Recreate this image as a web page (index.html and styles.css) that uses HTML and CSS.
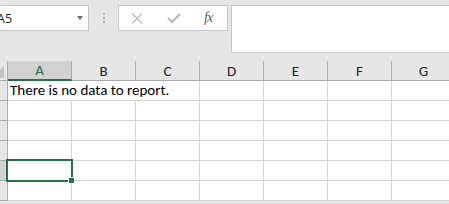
FILE: index.html
```html
<!DOCTYPE html>
<html>
<head>
  <title>Sheet</title>
  <link rel="stylesheet" href="styles.css">
</head>
<body>
  <div class="toolbar">
    <div class="name-box">
      <span class="cell-ref">A5</span>
      <span class="drop-arrow"></span>
    </div>
    <div class="splitter"><i></i><i></i><i></i></div>
    <div class="fx-buttons">
      <svg class="btn-cancel" width="12" height="11" viewBox="0 0 12 11">
        <path d="M1 0.5 L11 10.5 M11 0.5 L1 10.5" stroke="#bdbdbd" stroke-width="1.4" fill="none"/>
      </svg>
      <svg class="btn-enter" width="14" height="11" viewBox="0 0 14 11">
        <path d="M1 5 L5 9 L13 1" stroke="#bdbdbd" stroke-width="2.4" fill="none"/>
      </svg>
      <span class="btn-fx">fx</span>
    </div>
    <div class="formula-input"></div>
  </div>

  <div class="sheet">
    <div class="corner"><span class="corner-tri"></span></div>
    <div class="col-head active">A</div>
    <div class="col-head">B</div>
    <div class="col-head">C</div>
    <div class="col-head">D</div>
    <div class="col-head">E</div>
    <div class="col-head">F</div>
    <div class="col-head">G</div>

    <div class="row-head"></div>
    <div class="cell text-cell">There is no data to report.</div>
    <div class="cell"></div><div class="cell"></div><div class="cell"></div><div class="cell"></div>

    <div class="row-head"></div>
    <div class="cell"></div><div class="cell"></div><div class="cell"></div><div class="cell"></div><div class="cell"></div><div class="cell"></div><div class="cell"></div>

    <div class="row-head"></div>
    <div class="cell"></div><div class="cell"></div><div class="cell"></div><div class="cell"></div><div class="cell"></div><div class="cell"></div><div class="cell"></div>

    <div class="row-head"></div>
    <div class="cell"></div><div class="cell"></div><div class="cell"></div><div class="cell"></div><div class="cell"></div><div class="cell"></div><div class="cell"></div>

    <div class="row-head active"></div>
    <div class="cell selected">
      <div class="selection"></div>
      <div class="fill-handle"></div>
    </div>
    <div class="cell"></div><div class="cell"></div><div class="cell"></div><div class="cell"></div><div class="cell"></div><div class="cell"></div>

    <div class="row-head"></div>
    <div class="cell"></div><div class="cell"></div><div class="cell"></div><div class="cell"></div><div class="cell"></div><div class="cell"></div><div class="cell"></div>
  </div>
</body>
</html>
```

FILE: styles.css
```css
html {
  overflow: hidden;
}

body {
  margin: 0;
  background-color: #e6e6e6;
  font-family: Carlito, Lato, "Open Sans", sans-serif;
  overflow: hidden;
  width: 449px;
  height: 204px;
}

/* formula bar */
.toolbar {
  display: flex;
  align-items: flex-start;
  height: 61px;
  padding-top: 5px;
  box-sizing: border-box;
}

.name-box {
  display: flex;
  align-items: center;
  width: 101px;
  height: 26px;
  margin-left: -12px;
  padding-left: 8px;
  padding-right: 5px;
  box-sizing: border-box;
  background-color: #fff;
  border: 1px solid #c6c6c6;
  font-family: "Open Sans", sans-serif;
  font-size: 12.5px;
  color: #1e1e1e;
}

.drop-arrow {
  margin-left: auto;
  width: 0;
  height: 0;
  border-left: 3.5px solid transparent;
  border-right: 3.5px solid transparent;
  border-top: 4px solid #6d6d6d;
}

.splitter {
  display: flex;
  flex-direction: column;
  gap: 2px;
  margin: 8px 0 0 14px;
}

.splitter i {
  width: 2px;
  height: 2px;
  background-color: #b4b4b4;
}

.fx-buttons {
  display: flex;
  align-items: center;
  width: 110px;
  height: 26px;
  margin-left: 13px;
  padding-left: 12px;
  box-sizing: border-box;
  background-color: #fff;
  border: 1px solid #c6c6c6;
}

.btn-enter {
  margin-left: 24px;
}

.btn-fx {
  margin-left: 23px;
  font-family: "Liberation Serif", serif;
  font-style: italic;
  font-size: 14px;
  color: #5a5a5a;
  letter-spacing: -1px;
}

.formula-input {
  flex: 1;
  height: 46px;
  margin-left: 3px;
  background-color: #fff;
  border: 1px solid #c6c6c6;
  border-right: none;
}

/* grid */
.sheet {
  display: grid;
  grid-template-columns: 8px repeat(7, 64px);
  grid-auto-rows: 20px;
  background-color: #fff;
}

.sheet > div {
  box-sizing: border-box;
}

.corner {
  position: relative;
  background-color: #e6e6e6;
  border-right: 1px solid #ababab;
  border-bottom: 1px solid #ababab;
  overflow: hidden;
}

.corner-tri {
  position: absolute;
  right: 3px;
  bottom: 2px;
  width: 0;
  height: 0;
  border-left: 12px solid transparent;
  border-bottom: 12px solid #c4c4c4;
}

.col-head {
  display: flex;
  align-items: center;
  justify-content: center;
  background-color: #e6e6e6;
  border-right: 1px solid #ababab;
  border-bottom: 1px solid #ababab;
  font-size: 15px;
  color: #222;
}

.col-head.active {
  background-color: #d2d2d2;
  border-bottom: 2px solid #217346;
  color: #217346;
}

.row-head {
  background-color: #e6e6e6;
  border-right: 1px solid #ababab;
  border-bottom: 1px solid #ababab;
}

.row-head.active {
  background-color: #d2d2d2;
}

.cell {
  border-right: 1px solid #d4d4d4;
  border-bottom: 1px solid #d4d4d4;
}

.text-cell {
  grid-column: span 3;
  padding-left: 2px;
  font-size: 15px;
  line-height: 19px;
  color: #000;
  white-space: nowrap;
}

.selected {
  position: relative;
}

.selection {
  position: absolute;
  left: -2px;
  top: -2px;
  width: 67px;
  height: 23px;
  box-sizing: border-box;
  border: 2px solid #217346;
}

.fill-handle {
  position: absolute;
  left: 61px;
  top: 17px;
  width: 5px;
  height: 5px;
  background-color: #217346;
  box-shadow: -1px -1px 0 #fff;
}
```
